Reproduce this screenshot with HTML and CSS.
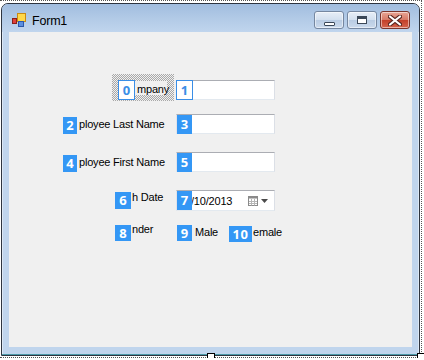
FILE: index.html
```html
<!DOCTYPE html>
<html lang="en">
<head>
  <meta charset="UTF-8">
  <title>Form1 [Design]</title>
  <link rel="stylesheet" href="styles.css">
</head>
<body>
  <div class="designer">
    <div class="window">
      <div class="titlebar">
        <svg class="app-icon" width="14" height="14" viewBox="0 0 14 14">
          <rect x="0.5" y="5.5" width="4" height="5" fill="#e0413a" stroke="#8a1f1a"/>
          <rect x="5.5" y="0.5" width="8" height="8" fill="#ffd84a" stroke="#c98a12"/>
          <rect x="6.5" y="8.5" width="5" height="5" fill="#5b8fe0" stroke="#2d58a8"/>
        </svg>
        <span class="title">Form1</span>
        <div class="caption-buttons">
          <span class="cap-btn"><span class="glyph-min"></span></span>
          <span class="cap-btn"><span class="glyph-max"></span></span>
          <span class="cap-btn close">
            <svg width="14" height="11" viewBox="0 0 14 11">
              <path d="M2 1.5 L12 9.5 M12 1.5 L2 9.5" stroke="#5a2620" stroke-width="4.2" stroke-linecap="round"/>
              <path d="M2 1.5 L12 9.5 M12 1.5 L2 9.5" stroke="#fff" stroke-width="2.2" stroke-linecap="round"/>
            </svg>
          </span>
        </div>
      </div>

      <div class="frame">
        <div class="client">
          <div class="form-grid">
            <!-- Company -->
            <div class="cell">
              <div class="hatch">
                <span class="badge outline tab0">0</span>
                <div class="hatch-inner">mpany</div>
              </div>
            </div>
            <div class="cell">
              <div class="textbox">
                <span class="badge outline tab1">1</span>
              </div>
            </div>

            <!-- Last name -->
            <div class="cell label wide">
              <span class="badge">2</span>
              <span class="label-text">ployee Last Name</span>
            </div>
            <div class="cell">
              <div class="textbox">
                <span class="badge over">3</span>
              </div>
            </div>

            <!-- First name -->
            <div class="cell label wide">
              <span class="badge">4</span>
              <span class="label-text">ployee First Name</span>
            </div>
            <div class="cell">
              <div class="textbox">
                <span class="badge over">5</span>
              </div>
            </div>

            <!-- Birth date -->
            <div class="cell label short date-label">
              <span class="badge">6</span>
              <span class="label-text">h Date</span>
            </div>
            <div class="cell">
              <div class="datebox">
                <span class="badge over tab7">7</span>
                <span class="date-text">/10/2013</span>
                <svg class="cal-icon" width="10" height="10" viewBox="0 0 10 10">
                  <rect x="0.5" y="0.5" width="9" height="9" fill="#fff" stroke="#8a8a8a"/>
                  <rect x="0.5" y="0.5" width="9" height="2" fill="#8a8a8a"/>
                  <path d="M3.5 3 V9.5 M6.5 3 V9.5 M1 5.5 H9 M1 7.5 H9" stroke="#b5b5b5"/>
                </svg>
                <svg class="drop-arrow" width="7" height="4" viewBox="0 0 7 4">
                  <polygon points="0,0 7,0 3.5,4" fill="#4a4a4a"/>
                </svg>
              </div>
            </div>

            <!-- Gender -->
            <div class="cell label short gender-label">
              <span class="badge">8</span>
              <span class="label-text">nder</span>
            </div>
            <div class="cell radios">
              <div class="radio">
                <span class="badge">9</span>
                <span class="label-text">Male</span>
              </div>
              <div class="radio">
                <span class="badge wide-badge">10</span>
                <span class="label-text">emale</span>
              </div>
            </div>
          </div>
        </div>
      </div>
    </div>
    <span class="handle handle-mid"></span>
    <span class="handle handle-corner"></span>
  </div>
</body>
</html>
```

FILE: styles.css
```css
*, *::before, *::after { box-sizing: border-box; }
body {
  margin: 0; background: #fff;
  font-family: "Liberation Sans", Arial, sans-serif;
}

/* Designer surface + selection */
.designer {
  position: relative; width: 422px; height: 358px;
  padding: 2px 0 0 1px;
  border: 1px dotted #555; border-left: none;
}
.handle {
  position: absolute; top: 352px; width: 8px; height: 8px;
  background: #fff; border: 1px solid #000;
}
.handle-mid { left: 207px; }
.handle-corner { left: 417px; }

/* Window chrome */
.window {
  width: 419px; height: 353px;
  display: flex; flex-direction: column;
  border: 1px solid #2e3540; border-radius: 7px 7px 0 0;
  background: #c0d5ed;
  box-shadow: inset 0 0 0 1px rgba(255,255,255,.45);
  overflow: hidden;
}
.titlebar {
  height: 28px; flex: none;
  display: flex; align-items: flex-start;
  padding: 7px 9px 0 10px;
  background: linear-gradient(#a1bddf, #b3cbe7 55%, #c0d5ed);
}
.app-icon { margin-top: 2px; }
.title {
  margin-left: 6px; margin-top: 3px;
  font-size: 12.5px; line-height: 14px; color: #000;
  letter-spacing: -.2px;
}
.caption-buttons { margin-left: auto; display: flex; gap: 3px; }
.cap-btn {
  width: 30px; height: 18px;
  display: flex; align-items: center; justify-content: center;
  border: 1px solid #7587a0; border-radius: 3px;
  background: linear-gradient(#e7eef7, #d3e0ef 48%, #b9cce3 52%, #cbdaec);
  box-shadow: inset 0 0 0 1px rgba(255,255,255,.5);
}
.cap-btn.close {
  border-color: #7b342b;
  background: linear-gradient(#e8a595, #d77a67 48%, #c3402a 52%, #d5644d);
}
.glyph-min {
  width: 11px; height: 4px; margin-top: 7px;
  background: #fff; border: 1px solid #3b4858; border-radius: 1px;
}
.glyph-max {
  width: 10px; height: 8px;
  background: #fff; border: 1px solid #3b4858; border-top-width: 3px;
}

.frame {
  flex: 1; padding: 0 7px 8px;
  box-shadow: inset 0 -1px #4c9aa9;
}
.client { height: 100%; background: #f0f0f0; }

/* Form layout */
.form-grid {
  display: grid;
  grid-template-columns: 167px 99px;
  grid-template-rows: 34px 38px 38px 35px 20px;
  padding-top: 48px;
  font-size: 11px; letter-spacing: -.2px; color: #000;
}
.cell { position: relative; }
.label { display: flex; align-items: flex-start; }
.label.wide { padding-left: 54px; }
.label.short { padding-left: 106px; }
.label-text { line-height: 13px; white-space: nowrap; }
.label.wide .badge { margin-top: 3px; }
.label.wide .label-text { margin: 4px 0 0 2px; }
.date-label .badge { margin-top: 2px; width: 16px; }
.date-label .label-text { margin: 1px 0 0 1px; }
.gender-label .badge { width: 16px; height: 16px; }
.gender-label .label-text { margin: -2px 0 0 1px; }

/* Tab order badges */
.badge {
  display: flex; align-items: center; justify-content: center;
  width: 14px; height: 17px; flex: none;
  background: #3497f5; color: #fff;
  font: 700 13px/1 "Open Sans", sans-serif; letter-spacing: 0;
}
.badge.outline { background: #fff; color: #3a8ee6; border: 1px solid #3a8ee6; }
.badge.over { position: absolute; left: 0; top: 0; width: 15px; height: 19px; }
.tab0 { position: absolute; left: 6px; top: 6px; width: 17px; height: 20px; }
.tab1 { position: absolute; left: -1px; top: -1px; width: 17px; height: 20px; }
.tab7 { top: 2px; height: 17px; left: 1px; }

/* Selected label */
.hatch {
  position: relative; width: 62px; height: 27px;
  margin: -6px 0 0 103px; padding: 7px 7px 6px;
  background: repeating-conic-gradient(#a8a8a8 0 25%, #f0f0f0 0 50%) 0 0 / 2px 2px;
}
.hatch-inner {
  height: 14px; padding-left: 18px;
  background: #f0f0f0; line-height: 16px; white-space: nowrap;
}

/* Controls */
.textbox, .datebox {
  position: relative; width: 99px; height: 20px;
  background: #fff;
  border: 1px solid; border-color: #abadb3 #dbdfe6 #e3e9ef #e2e3ea;
}
.datebox {
  height: 21px; display: flex; align-items: center;
  padding-left: 14px;
}
.date-text { line-height: 13px; margin-top: 2px; }
.cal-icon { margin-left: auto; }
.drop-arrow { margin: 1px 6px 0 3px; }

.radios { display: flex; gap: 11px; padding-left: 1px; }
.radio { display: flex; align-items: flex-start; }
.radio .badge { width: 15px; height: 16px; }
.radio .wide-badge { width: 23px; margin-top: 1px; letter-spacing: .5px; }
.radio .label-text { margin-left: 3px; line-height: 13px; margin-top: 1px; }
.radio:last-child .label-text { margin-left: 1px; }
```
